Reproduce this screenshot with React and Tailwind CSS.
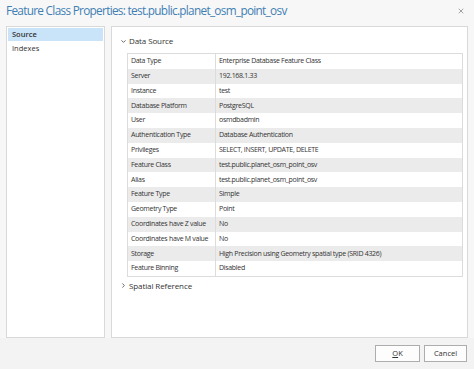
import { ChevronDown, ChevronRight, X } from 'lucide-react';

const rows = [
  ['Data Type', 'Enterprise Database Feature Class'],
  ['Server', '192.168.1.33'],
  ['Instance', 'test'],
  ['Database Platform', 'PostgreSQL'],
  ['User', 'osmdbadmin'],
  ['Authentication Type', 'Database Authentication'],
  ['Privileges', 'SELECT, INSERT, UPDATE, DELETE'],
  ['Feature Class', 'test.public.planet_osm_point_osv'],
  ['Alias', 'test.public.planet_osm_point_osv'],
  ['Feature Type', 'Simple'],
  ['Geometry Type', 'Point'],
  ['Coordinates have Z value', 'No'],
  ['Coordinates have M value', 'No'],
  ['Storage', 'High Precision using Geometry spatial type (SRID 4326)'],
  ['Feature Binning', 'Disabled'],
];

export default function App() {
  return (
    <div
      className="w-[474px] h-[369px] bg-[#f7f7f7] flex flex-col text-[#333] overflow-hidden"
      style={{ fontFamily: '"Open Sans", "Noto Sans", sans-serif' }}
    >
      {/* title bar */}
      <div className="h-[26px] flex items-center justify-between pl-[6px] pr-[9px] pb-[4px]">
        <h1 className="text-[11.8px] text-[#3f7fb3] leading-none tracking-[-0.7px]">
          Feature Class Properties: test.public.planet_osm_point_osv
        </h1>
        <X className="w-[8px] h-[8px] text-[#777]" strokeWidth={2} />
      </div>

      {/* body */}
      <div className="flex gap-[6px] px-[6px] h-[312px]">
        <div className="w-[99px] bg-white border border-[#d9d9d9] p-px">
          <div className="h-[13px] bg-[#c9e3f8] text-[7.5px] font-semibold pl-[4px] leading-[13px]">Source</div>
          <div className="h-[14px] text-[7.5px] pl-[4px] leading-[14px]">Indexes</div>
        </div>

        <div className="flex-1 bg-white border border-[#d9d9d9] pl-[8px] pr-[4px] pt-[8px]">
          <div className="flex items-center gap-[2px] h-[12px] text-[8px] tracking-[-0.1px]">
            <ChevronDown className="w-[7px] h-[7px] text-[#555]" strokeWidth={3} />
            <span>Data Source</span>
          </div>
          <div className="ml-[7px] mt-[6px] border border-[#dcdcdc]">
            {rows.map(([k, v], i) => (
              <div
                key={k}
                className={`flex h-[14.8px] items-center text-[7px] tracking-[-0.3px] ${i % 2 ? 'bg-[#ebebeb]' : 'bg-white'}`}
              >
                <div className="w-[88px] pl-[3px] h-full flex items-center border-r border-[#dcdcdc] whitespace-nowrap overflow-hidden">{k}</div>
                <div className="pl-[3px] whitespace-nowrap">{v}</div>
              </div>
            ))}
          </div>
          <div className="flex items-center gap-[2px] h-[12px] text-[8px] tracking-[-0.1px] mt-[3px]">
            <ChevronRight className="w-[7px] h-[7px] text-[#555]" strokeWidth={3} />
            <span>Spatial Reference</span>
          </div>
        </div>
      </div>

      {/* footer */}
      <div className="flex-1 bg-[#f3f3f3] flex justify-end items-center gap-[4px] pr-[7px]">
        <button className="w-[45px] h-[17px] border border-[#adadad] bg-[#fdfdfd] text-[7.5px]">
          <span className="underline">O</span>K
        </button>
        <button className="w-[43px] h-[17px] border border-[#adadad] bg-[#fdfdfd] text-[7.5px]">Cancel</button>
      </div>
    </div>
  );
}
